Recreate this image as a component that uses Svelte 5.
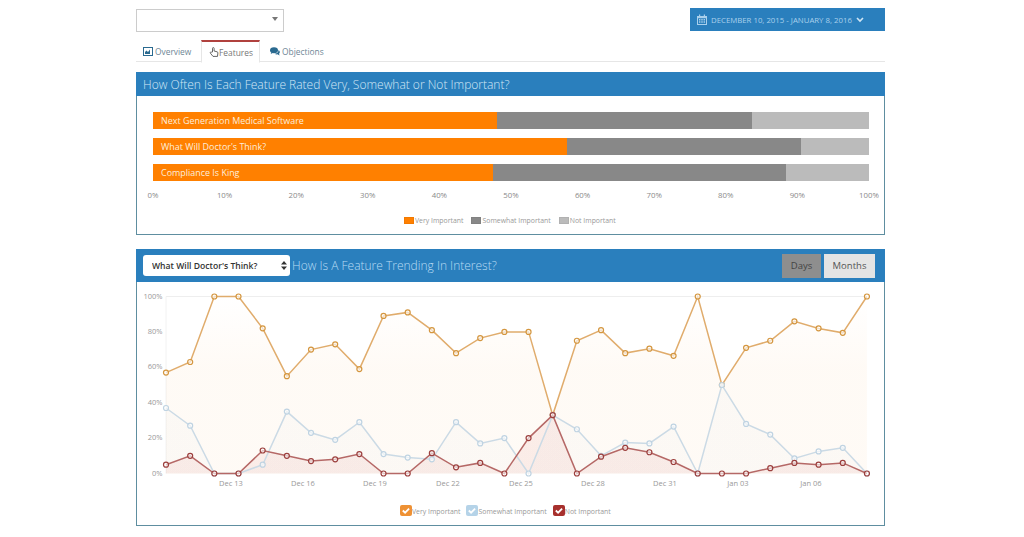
<script>
  const very = [57, 63, 100, 100, 82, 55, 70, 73, 59, 89, 91, 81, 68, 76.5, 80, 80, 33, 75, 81, 68, 70.5, 66.5, 100, 50, 71, 75, 86, 82, 79.5, 100];
  const somewhat = [37, 27, 0, 0, 5, 35, 23, 19, 29, 11, 9, 8, 29, 17, 20, 0, 33, 25, 10, 17.5, 17, 26.5, 0, 50, 28, 22, 8.5, 12.5, 14.5, 0];
  const notImp = [5, 10, 0, 0, 13, 10, 7, 8, 11, 0, 0, 11.5, 3.5, 6, 0, 20, 33, 0, 9.5, 14.5, 12, 6.5, 0, 0, 0, 3, 6, 5, 6, 0];

  const bars = [
    { name: 'Next Generation Medical Software', a: 48, b: 35.6, c: 16.4 },
    { name: "What Will Doctor's Think?", a: 57.8, b: 32.7, c: 9.5 },
    { name: 'Compliance Is King', a: 47.5, b: 40.9, c: 11.6 }
  ];
  const ticks = [0, 10, 20, 30, 40, 50, 60, 70, 80, 90, 100];
  const xLabels = [
    ['Dec 13', 94], ['Dec 16', 166], ['Dec 19', 238], ['Dec 22', 311], ['Dec 25', 384],
    ['Dec 28', 456], ['Dec 31', 528], ['Jan 03', 601], ['Jan 06', 674]
  ];

  const px = (i) => 29 + i * 24.17;
  const py = (v) => 14.5 + (100 - v) * 1.77;
  const line = (d) => d.map((v, i) => `${px(i).toFixed(1)},${py(v).toFixed(1)}`).join(' ');
  const area = (d) => `${px(0)},${py(0)} ${line(d)} ${px(29).toFixed(1)},${py(0)}`;

  const series = [
    { data: very, color: '#e0ac6c', dot: '#d4963f', fill: 'url(#fillVery)' },
    { data: somewhat, color: '#cbdae5', dot: '#bfd3e2', fill: 'url(#fillSome)' },
    { data: notImp, color: '#b56866', dot: '#9c3f3d', fill: 'url(#fillNot)' }
  ];
  const legend2 = [
    { label: 'Very Important', color: '#ee9134' },
    { label: 'Somewhat Important', color: '#b5d3e8' },
    { label: 'Not Important', color: '#a7302d' }
  ];
</script>

<div class="page">
  <div class="toolbar">
    <button type="button" class="blank-select" aria-label="Select"><span class="caret"></span></button>
    <button type="button" class="date-btn">
      <svg width="10" height="11" viewBox="0 0 10 11"><path fill="#a9d0ec" d="M0 2h2V.6h1.2V2h3.6V.6H8V2h2v9H0zM1 4.2V10h8V4.2z"/><path fill="#a9d0ec" d="M2 5h1.4v1.4H2zM4.3 5h1.4v1.4H4.3zM6.6 5H8v1.4H6.6zM2 7.3h1.4v1.4H2zM4.3 7.3h1.4v1.4H4.3zM6.6 7.3H8v1.4H6.6z"/></svg>
      <span>DECEMBER 10, 2015 - JANUARY 8, 2016</span>
      <svg class="chev" width="8" height="6" viewBox="0 0 8 6"><path d="M1 1l3 3 3-3" fill="none" stroke="#cfe5f5" stroke-width="1.6"/></svg>
    </button>
  </div>

  <div class="tabs">
    <div class="tab overview">
      <svg width="10" height="9" viewBox="0 0 10 9"><path fill="#2a6a90" d="M0 0h10v9H0zM1 1v7h8V1z"/><path fill="#2a6a90" d="M2 7V5l1.500-1.500L5 5l2-2.500V7z"/></svg>
      Overview
    </div>
    <div class="tab active">
      <svg width="10" height="10" viewBox="0 0 10 10"><path fill="none" stroke="#555" stroke-width="0.9" d="M3.500 5V1.400a.8.8 0 0 1 1.600 0V4l3 .8c.6.2.9.6.8 1.200l-.4 3.400H4L1.400 6.200c-.6-.8.4-1.700 1.200-1z"/></svg>
      Features
    </div>
    <div class="tab">
      <svg width="10" height="9" viewBox="0 0 10 9"><ellipse cx="4" cy="3.200" rx="4" ry="3" fill="#2a6a90"/><path fill="#2a6a90" d="M1.500 5l-.8 2 2.500-1.200zM8.500 3c1.500 1 1.800 2.800.5 3.800l.6 1.700-2.200-1.200c-1 .2-2 0-2.700-.6 2 0 4-1.500 3.800-3.700z"/></svg>
      Objections
    </div>
  </div>

  <section class="panel first">
    <header class="panel-head">How Often Is Each Feature Rated Very, Somewhat or Not Important?</header>
    <div class="bars-body">
      {#each bars as bar}
        <div class="bar">
          <div class="seg very" style="width: {bar.a}%">{bar.name}</div>
          <div class="seg some" style="width: {bar.b}%"></div>
          <div class="seg nope" style="width: {bar.c}%"></div>
        </div>
      {/each}
      <div class="axis">
        {#each ticks as t}
          <span class="tick"><span>{t}%</span></span>
        {/each}
      </div>
      <div class="legend bar-legend">
        <span class="key"><i class="swatch very"></i>Very Important</span>
        <span class="key"><i class="swatch some"></i>Somewhat Important</span>
        <span class="key"><i class="swatch nope"></i>Not Important</span>
      </div>
    </div>
  </section>

  <section class="panel second">
    <header class="panel-head trend-head">
      <div class="select-wrap">
        <select aria-label="Feature">
          <option>What Will Doctor's Think?</option>
          <option>Next Generation Medical Software</option>
          <option>Compliance Is King</option>
        </select>
        <svg width="6" height="9" viewBox="0 0 6 9"><path fill="#333" d="M0 3.500L3 0l3 3.500zM0 5.500h6L3 9z"/></svg>
      </div>
      <span class="trend-title">How Is A Feature Trending In Interest?</span>
      <div class="range">
        <button type="button" class="range-btn on">Days</button>
        <button type="button" class="range-btn">Months</button>
      </div>
    </header>

    <svg class="chart" width="747" height="213" viewBox="0 0 747 213">
      <defs>
        <linearGradient id="fillVery" x1="0" y1="0" x2="0" y2="1">
          <stop offset="0" stop-color="#f6a040" stop-opacity="0"/>
          <stop offset="0.4" stop-color="#f6a040" stop-opacity="0.05"/>
          <stop offset="1" stop-color="#f6a040" stop-opacity="0.05"/>
        </linearGradient>
        <linearGradient id="fillSome" x1="0" y1="0" x2="0" y2="1">
          <stop offset="0" stop-color="#c5d6e2" stop-opacity="0.05"/>
          <stop offset="1" stop-color="#c5d6e2" stop-opacity="0.05"/>
        </linearGradient>
        <linearGradient id="fillNot" x1="0" y1="0" x2="0" y2="1">
          <stop offset="0" stop-color="#d9706c" stop-opacity="0.1"/>
          <stop offset="1" stop-color="#d9706c" stop-opacity="0.1"/>
        </linearGradient>
      </defs>

      <line x1="29" y1="14.500" x2="730" y2="14.500" stroke="#eee"/>
      <line x1="29" y1="14.500" x2="29" y2="191.500" stroke="#f2f2f2"/>

      {#each [100, 80, 60, 40, 20, 0] as v}
        <text class="tx" x="25.500" y={py(v) + 2} text-anchor="end">{v}%</text>
      {/each}
      {#each xLabels as [label, x]}
        <text class="tx" {x} y="204" text-anchor="middle">{label}</text>
      {/each}

      {#each series as s}
        <polygon points={area(s.data)} fill={s.fill}/>
      {/each}
      {#each series as s}
        <polyline points={line(s.data)} fill="none" stroke={s.color} stroke-width="1.500"/>
        {#each s.data as v, i}
          <circle cx={px(i)} cy={py(v)} r="2.500" fill="#fff" fill-opacity="0.6" stroke={s.dot} stroke-width="1.200"/>
        {/each}
      {/each}
    </svg>

    <div class="legend check-legend">
      {#each legend2 as item}
        <span class="key">
          <svg width="12" height="12" viewBox="0 0 12 12">
            <rect width="12" height="11" rx="2" fill={item.color}/>
            <path d="M2.800 5.500l2.300 2.200 4-4" fill="none" stroke="#fff" stroke-width="1.800"/>
          </svg>
          {item.label}
        </span>
      {/each}
    </div>
  </section>
</div>

<style>
  :global(body) {
    background: #fff;
    font-family: "Open Sans", "Liberation Sans", sans-serif;
  }
  .page {
    width: 749px;
    margin-left: 136px;
    padding-top: 8px;
  }
  .toolbar {
    display: flex;
    justify-content: space-between;
    align-items: flex-start;
    height: 32px;
  }
  .blank-select {
    width: 148px;
    height: 23px;
    margin-top: 1px;
    position: relative;
    background: #fff;
    border: 1px solid #ccc;
    padding: 0;
  }
  .caret {
    position: absolute;
    right: 5px;
    top: 7px;
    border: 3px solid transparent;
    border-top: 4px solid #777;
    border-bottom: 0;
  }
  .date-btn {
    display: flex;
    align-items: center;
    gap: 4px;
    width: 195px;
    height: 23px;
    padding: 0 0 0 7px;
    border: none;
    background: #2a7fbd;
    color: #a9d0ec;
    font-family: inherit;
    font-size: 7.800px;
    white-space: nowrap;
  }
  .chev {
    margin-left: 0;
  }
  .tabs {
    display: flex;
    height: 22px;
    border-bottom: 1px solid #e6e6e6;
    box-sizing: border-box;
    font-size: 8.400px;
    color: #6f8796;
  }
  .tab {
    display: flex;
    flex-shrink: 0;
    align-items: center;
    gap: 2px;
    padding: 0 7px;
    margin-right: 4px;
    height: 22px;
    box-sizing: border-box;
  }
  .tab.overview {
    width: 61px;
  }
  .tab.active {
    background: #fff;
    color: #777;
    width: 59px;
    border: 1px solid #e6e6e6;
    border-top: 2px solid #b0413e;
    border-bottom-color: #fff;
    gap: 0;
    padding: 0 0 0 7px;
    height: 23px;
    margin-right: 3px;
  }
  .tab svg {
    flex-shrink: 0;
  }
  .panel {
    border: 1px solid #5e8ea0;
    border-top: none;
    box-sizing: border-box;
  }
  .panel.first {
    margin-top: 10px;
    height: 163px;
  }
  .panel.second {
    margin-top: 14px;
    height: 277px;
  }
  .panel-head {
    height: 24px;
    margin: 0 -1px;
    padding-left: 7px;
    background: #2a7fbd;
    color: #d5e8f6;
    font-size: 12px;
    font-weight: 300;
    line-height: 25px;
  }
  .bars-body {
    padding: 16px 15px 0 16px;
  }
  .bar {
    display: flex;
    height: 17px;
    margin-bottom: 9px;
  }
  .seg {
    height: 100%;
  }
  .very {
    background: #ff8000;
  }
  .some {
    background: #888;
  }
  .nope {
    background: #bbb;
  }
  .seg.very {
    box-sizing: border-box;
    padding-left: 8px;
    color: #fdeedd;
    font-size: 8.950px;
    line-height: 17px;
    white-space: nowrap;
  }
  .axis {
    display: flex;
    justify-content: space-between;
    margin-top: 6px;
    height: 12px;
    font-size: 7.800px;
    color: #8a8a8a;
  }
  .tick {
    width: 0;
    display: flex;
    justify-content: center;
    white-space: nowrap;
  }
  .legend {
    display: flex;
    color: #999;
    font-size: 6.900px;
  }
  .bar-legend {
    margin-top: 14px;
    padding-left: 251px;
    gap: 8px;
  }
  .key {
    display: inline-flex;
    align-items: center;
    white-space: nowrap;
  }
  .swatch {
    box-sizing: border-box;
    width: 10px;
    height: 7px;
    margin-right: 1px;
    border: 1px solid rgba(0, 0, 0, 0.05);
  }
  .trend-head {
    height: 33px;
    display: flex;
    align-items: center;
    padding-left: 7px;
  }
  .select-wrap {
    position: relative;
    width: 147px;
    height: 21px;
    margin-right: 2px;
  }
  .select-wrap select {
    appearance: none;
    display: block;
    width: 100%;
    height: 100%;
    border: none;
    border-radius: 3px;
    background: #fff;
    color: #333;
    font-family: inherit;
    font-size: 8.600px;
    font-weight: 600;
    padding: 0 0 0 9px;
  }
  .select-wrap svg {
    position: absolute;
    right: 3px;
    top: 6px;
  }
  .trend-title {
    font-size: 12px;
    color: #b9dcf4;
  }
  .range {
    display: flex;
    gap: 3px;
    margin-left: auto;
    margin-right: 10px;
  }
  .range-btn {
    height: 24px;
    padding: 0;
    border: none;
    background: #e4e4e4;
    color: #555;
    font-family: inherit;
    font-size: 9.500px;
    width: 51px;
  }
  .range-btn.on {
    background: #8e8e8e;
    width: 39px;
    color: #444;
  }
  .chart {
    display: block;
  }
  .tx {
    font-size: 7.500px;
    fill: #999;
  }
  .check-legend {
    padding-left: 263px;
    gap: 6px;
    margin-top: 10px;
  }
</style>
